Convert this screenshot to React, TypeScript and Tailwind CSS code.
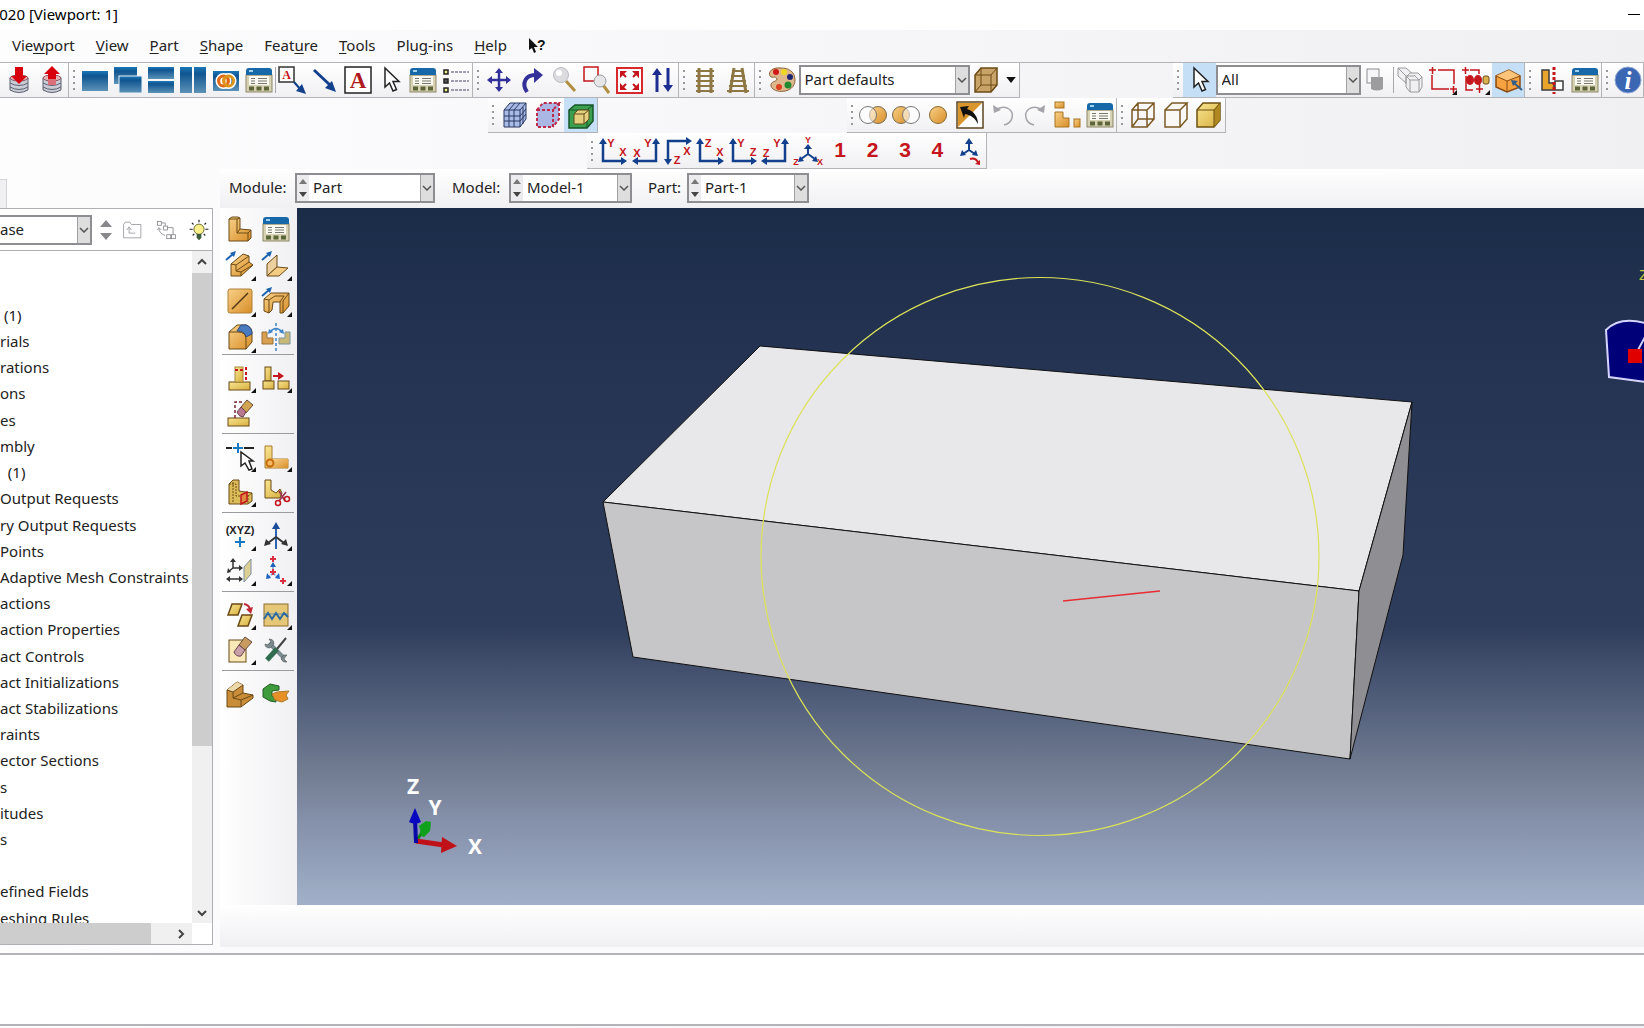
import React from 'react';
import clsx from 'clsx';

const gold = 'url(#gold)';
const yellow = 'url(#yellow)';
const blue = 'url(#blue)';
const RED = '#c4161c';
const NAVY = '#12408c';
const BROWN = '#6b4a16';

const tableIcon = (
  <>
    <rect x="1" y="9" width="26" height="17" fill="#d8d2b4" stroke="#8b8768" />
    <path d="M1 9V5q0-3 3-3h20q3 0 3 3v4z" fill="#1668a8" />
    <path d="M4 5h4" stroke="#9fd0f0" strokeWidth="2" />
    <rect x="4" y="10" width="20" height="9" fill="#fbfaf2" />
    <path d="M6 12.500h4M13 12.500h9M6 15h4M13 15h9M6 17.500h4M13 17.500h9" stroke="#77776c" />
    <path d="M4 22.500h5M11.500 22.500h5M19 22.500h5" stroke="#5c6638" strokeWidth="4" />
  </>
);

const cursorPath = 'M9 2v19l4.500-4 3.500 8 3.500-1.500-3.500-8h6z';

const icons: Record<string, React.ReactNode> = {
  dbIn: (
    <>
      <path d="M5 12v12q9 5 18 0V12z" fill="#c9ccd4" stroke="#5c6070" />
      <path d="M5 17q9 5 18 0M5 21q9 5 18 0" stroke="#5c6070" fill="none" />
      <ellipse cx="14" cy="12" rx="9" ry="3" fill="#e8b4b8" stroke="#8a5560" />
      <path d="M10 1h8v9h4l-8 8-8-8h4z" fill="#d8000c" />
    </>
  ),
  dbOut: (
    <>
      <path d="M5 12v12q9 5 18 0V12z" fill="#c9ccd4" stroke="#5c6070" />
      <path d="M5 17q9 5 18 0M5 21q9 5 18 0" stroke="#5c6070" fill="none" />
      <ellipse cx="14" cy="12" rx="9" ry="3" fill="#e8b4b8" stroke="#8a5560" />
      <path d="M10 12h8v7h-8z" fill="#d9707a" />
      <path d="M10 13V8H6l8-8 8 8h-4v5z" fill="#d8000c" />
    </>
  ),
  window: <rect x="1" y="5" width="26" height="20" fill={blue} />,
  cascade: (
    <>
      <rect x="0" y="1" width="23" height="17" fill={blue} />
      <rect x="5" y="10" width="23" height="17" fill={blue} stroke="#e8f0f8" />
    </>
  ),
  tileRows: (
    <>
      <rect x="1" y="1" width="26" height="12" fill={blue} />
      <rect x="1" y="15" width="26" height="12" fill={blue} />
    </>
  ),
  tileCols: (
    <>
      <rect x="1" y="1" width="12" height="26" fill={blue} />
      <rect x="15" y="1" width="12" height="26" fill={blue} />
    </>
  ),
  overlay: (
    <>
      <rect x="1" y="5" width="26" height="20" fill={blue} />
      <circle cx="11.500" cy="15" r="6" fill="#f4c898" stroke="#fff" strokeWidth="4" />
      <circle cx="16.500" cy="15" r="6" fill="none" stroke="#fff" strokeWidth="4" />
      <circle cx="11.500" cy="15" r="5" fill="none" stroke="#e06818" strokeWidth="3" />
      <circle cx="16.500" cy="15" r="5" fill="none" stroke="#dc9418" strokeWidth="3" />
    </>
  ),
  table: tableIcon,
  noteArrow: (
    <>
      <rect x="1" y="1" width="15" height="15" fill="#fff" stroke="#333" strokeWidth="1.500" />
      <text x="8.500" y="13" textAnchor="middle" fontSize="12" fontWeight="bold" fontFamily="Liberation Serif" fill={RED}>A</text>
      <path d="M16 16l7 8" stroke={NAVY} strokeWidth="2" />
      <path d="M28 28l-10-3 6-7z" fill={NAVY} />
    </>
  ),
  arrow: (
    <>
      <path d="M3 4l17 16" stroke={NAVY} strokeWidth="3" />
      <path d="M25 26l-11-4 7-7z" fill={NAVY} />
    </>
  ),
  letterA: (
    <>
      <rect x="1" y="1" width="26" height="26" fill="#fff" stroke="#222" strokeWidth="1.500" />
      <text x="14" y="22" textAnchor="middle" fontSize="23" fontWeight="bold" fontFamily="Liberation Serif" fill="#b01820">A</text>
    </>
  ),
  cursor: <path d={cursorPath} fill="#fff" stroke="#222" strokeWidth="1.500" />,
  list: (
    <>
      <g fill="#eef08a" stroke="#222" strokeWidth="1.500">
        <rect x="2" y="4" width="4" height="4" />
        <rect x="2" y="13" width="4" height="4" fill="#555" />
        <rect x="2" y="22" width="4" height="4" />
      </g>
      <path d="M9 6h18M9 15h18M9 24h18" stroke="#446" strokeDasharray="3 1" />
    </>
  ),
  pan: (
    <g stroke="#33309a" fill="#33309a">
      <path d="M14 5v18M5 14h18" strokeWidth="2.500" />
      <path d="M14 2l4 5h-8zM14 26l4-5h-8zM2 14l5-4v8zM26 14l-5-4v8z" stroke="none" />
    </g>
  ),
  rotate: (
    <>
      <path d="M9 26C3 17 8 9 17 9" fill="none" stroke="#33309a" strokeWidth="4" />
      <path d="M16 2l9 7-9 8z" fill="#33309a" />
    </>
  ),
  magnify: (
    <>
      <path d="M16 15l9 10" stroke="#b09040" strokeWidth="3" />
      <circle cx="11" cy="9" r="7.500" fill="#dcdce0" stroke="#bcbcc4" />
      <circle cx="9" cy="7" r="3" fill="#fff" />
    </>
  ),
  boxZoom: (
    <>
      <rect x="1" y="1" width="14" height="14" fill="none" stroke={RED} strokeWidth="1.500" />
      <path d="M20 19l6 8" stroke="#b09040" strokeWidth="3" />
      <circle cx="17" cy="15" r="6" fill="#e6e6e8" stroke="#9c9ca4" />
    </>
  ),
  fit: (
    <>
      <rect x="2" y="2" width="25" height="25" fill="#fff" stroke="#d8282c" strokeWidth="2" />
      <path d="M11 11L6 6M18 11l5-5M11 18l-5 5M18 18l5 5" stroke={RED} strokeWidth="2" />
      <path d="M5 5h7l-7 7zM24 5h-7l7 7zM5 24h7l-7-7zM24 24h-7l7-7z" fill={RED} />
    </>
  ),
  cycle: (
    <g stroke="#1d2c90" fill="#1d2c90">
      <path d="M9 6v20M20 2v20" strokeWidth="3" />
      <path d="M9 2l5 7H4zM20 26l5-7H15z" stroke="none" />
    </g>
  ),
  parallel: (
    <g stroke="#8e7742" strokeWidth="2">
      <path d="M8 2v25M20 2v25" strokeWidth="3" />
      <path d="M5 5h18M5 10h18M5 15h18M5 20h18M5 25h18" />
    </g>
  ),
  perspective: (
    <g stroke="#8e7742" strokeWidth="2" fill="none">
      <path d="M10 2L6 27M18 2l4 25" strokeWidth="3" />
      <path d="M8 5h12M7 10h14M6 15h16M5 20h18M3 25h22" />
    </g>
  ),
  palette: (
    <>
      <path d="M13 2C4 1 0 6 2 10c2 3 6-1 7 3 0 3-7 2-6 7 2 8 24 8 24-6C27 5 20 2 13 2z" fill="#dfb78c" stroke="#8a6238" />
      <circle cx="8" cy="6" r="3" fill="#d01818" />
      <circle cx="16" cy="6" r="3" fill="#f0d820" />
      <circle cx="22" cy="11" r="3" fill="#1c2470" />
      <circle cx="20" cy="19" r="3.500" fill="#218a30" />
      <circle cx="11" cy="21" r="3" fill="#e04020" />
    </>
  ),
  cubeTan: (
    <>
      <path d="M3 9l6-7h16v17l-6 7H3z" fill="#c9a468" stroke={BROWN} strokeWidth="1.500" />
      <path d="M3 9h16v17M19 9l6-7M9 2v17h16M3 26l6-7" fill="none" stroke={BROWN} />
    </>
  ),
  copyGrey: (
    <>
      <rect x="4" y="3" width="12" height="14" fill="#f6f6f8" stroke="#8e8e92" />
      <path d="M8 11h12v12q-6 3-12 0z" fill="#9c9c9e" />
    </>
  ),
  cubesGrey: (
    <g fill="#f0f0f2" stroke="#9a9a9e">
      <path d="M2 8V2h8l8 7v8H10L2 10z" />
      <path d="M10 11l4-4h8l4 4v10l-3 5h-9l-4-5z" />
      <path d="M2 2l8 8h8M10 10v8M14 14h9l3-3M14 14v12M23 14v12M10 10l4 4M18 9l5 5" fill="none" />
    </g>
  ),
  dragBox: (
    <g stroke={RED} strokeWidth="1.500" fill="none">
      <path d="M9 4h16v14M3 9v14h17" />
      <path d="M0 4h7M3.500 1v7M21 23h7M24.500 20v7" />
    </g>
  ),
  dragPoints: (
    <>
      <path d="M1 4h7M4.500 1v7M9 4h9v4M5 10v14h7M15 23h7M18.500 18v9" stroke={RED} strokeWidth="1.500" fill="none" />
      <ellipse cx="9" cy="14" rx="4" ry="5" fill={RED} />
      <ellipse cx="17" cy="14" rx="4" ry="5" fill={RED} />
      <rect x="22" y="10" width="6" height="8" rx="2" fill="#d8b050" stroke={BROWN} />
    </>
  ),
  cubeOrange: (
    <>
      <path d="M2 10L15 4l11 6v11l-13 5L2 21z" fill="#f6a240" stroke="#8b4a10" strokeWidth="1.500" />
      <path d="M2 10L15 4l11 6-13 5z" fill="#fcc478" />
      <path d="M2 10l11 5 13-5M13 15v11" fill="none" stroke="#8b4a10" />
      <path d="M28 24l-8-7" stroke="#345c84" strokeWidth="2" />
      <path d="M17 14l7 1-5 5z" fill="#345c84" />
    </>
  ),
  lHalf: (
    <>
      <path d="M4 4h7v13h5v7H4z" fill="#e8a42c" stroke="#3c3c3c" strokeWidth="1.500" />
      <path d="M17 15h8v9h-8z" fill="#fff" stroke="#3c3c3c" strokeWidth="1.500" />
      <path d="M16 1v27" stroke={RED} strokeWidth="3" strokeDasharray="3 2" />
    </>
  ),
  info: (
    <>
      <circle cx="14" cy="14" r="13" fill="#3b66b4" stroke="#8fa8d4" />
      <text x="14" y="23" textAnchor="middle" fontSize="25" fontStyle="italic" fontWeight="bold" fontFamily="Liberation Serif" fill="#fff">i</text>
    </>
  ),
  meshCube: (
    <>
      <path d="M3 9l6-7h16v16l-6 8H3z" fill="#a9bce8" />
      <path d="M3 9h16v17H3zM3 9l6-7h16l-6 7M25 2v16l-6 8M8 9v17M13 9v17M3 15h16l6-7M3 20h16l6-7M8 9l6-7M13 9l6-7M22 6v17" fill="none" stroke="#283860" />
    </>
  ),
  redCube: (
    <>
      <path d="M3 9l6-7h16v16l-6 8H3z" fill="#aab6e4" />
      <path d="M3 9h16v17H3zM3 9l6-7h16l-6 7M25 2v16l-6 8" fill="none" stroke="#c02848" strokeWidth="2" strokeDasharray="3 2" />
    </>
  ),
  greenCube: (
    <>
      <path d="M2 9l6-5h18v16l-6 7H2z" fill="#3aa050" stroke="#165428" strokeWidth="1.500" />
      <path d="M2 9h18v18M20 9l6-5" fill="none" stroke="#165428" />
      <path d="M7 13l4-4h11v9l-5 5H7z" fill="#e6d080" stroke="#5c4c18" />
      <path d="M7 13h10v10M17 13l5-4" fill="none" stroke="#5c4c18" />
    </>
  ),
  vennRight: (
    <>
      <circle cx="19" cy="14" r="8.500" fill={gold} stroke="#7a6a50" />
      <circle cx="9" cy="14" r="8.500" fill="#fff" fillOpacity="0.500" stroke="#777" />
    </>
  ),
  vennLeft: (
    <>
      <circle cx="9" cy="14" r="8.500" fill={gold} stroke="#7a6a50" />
      <circle cx="19" cy="14" r="8.500" fill="#fff" fillOpacity="0.600" stroke="#777" />
    </>
  ),
  disc: <circle cx="14" cy="14" r="8.500" fill={gold} stroke="#8a6a30" />,
  replace: (
    <>
      <rect x="1" y="1" width="26" height="26" fill="#fff" stroke="#5c4420" strokeWidth="1.500" />
      <path d="M2 2h24L2 26z" fill="#d8962c" />
      <path d="M4 6l9-1-2 3c7 2 11 8 11 15-3-6-7-9-13-10l-1 4z" fill="#111" />
    </>
  ),
  undo: (
    <>
      <path d="M8 8c10-5 17 2 15 9-1 4-4 6-8 7" fill="none" stroke="#a4a4aa" strokeWidth="1.500" />
      <path d="M4 4l1 8 7-3z" fill="#a4a4aa" />
    </>
  ),
  redo: (
    <>
      <path d="M20 8C10 3 3 10 5 17c1 4 4 6 8 7" fill="none" stroke="#a4a4aa" strokeWidth="1.500" />
      <path d="M24 4l-1 8-7-3z" fill="#a4a4aa" />
    </>
  ),
  blocks: (
    <g fill={gold} stroke="#a87420">
      <rect x="2" y="1" width="9" height="6" />
      <path d="M2 11h8v6h6v9H2z" />
      <rect x="21" y="18" width="6" height="8" />
    </g>
  ),
  wireCube: <path d="M3 9h15v17H3zM9 2h16v16H9zM3 9l6-7M18 9l7-7M18 26l7-8M3 26l6-8" fill="none" stroke="#7c5a24" strokeWidth="1.500" />,
  hiddenCube: <path d="M3 9h15v17H3zM3 9l7-7h15l-7 7M25 2v16l-7 8" fill="#faf8f4" stroke="#7c5a24" strokeWidth="1.500" />,
  shadedCube: (
    <>
      <path d="M2 9l6-7h17v17l-6 7H2z" fill={yellow} stroke="#6c5010" strokeWidth="1.500" />
      <path d="M19 9l6-7v17l-6 7z" fill="#b08820" />
      <path d="M2 9h17v17M19 9l6-7" fill="none" stroke="#6c5010" />
    </>
  ),
  triad: (
    <>
      <path d="M14 10v7M14 17l-7 5M14 17l7 5" stroke={NAVY} strokeWidth="2" />
      <path d="M14 7l4 5h-8zM4 25l2-6 4 5zM24 25l-2-6-4 5z" fill={NAVY} />
      <g fontSize="9" fontWeight="bold" fontFamily="Liberation Sans" fill={RED} textAnchor="middle">
        <text x="14" y="6">Y</text>
        <text x="2" y="28">Z</text>
        <text x="26" y="28">X</text>
      </g>
    </>
  ),
  triadTurn: (
    <>
      <path d="M13 5v8M13 13l-6 4M13 13l6 4" stroke={NAVY} strokeWidth="2" />
      <path d="M13 1l4 6H9zM4 19l2-6 4 5zM22 19l-2-6-4 5z" fill={NAVY} />
      <path d="M14 22q5-2 8 3" fill="none" stroke={RED} strokeWidth="2" />
      <path d="M24 28l-5-1 5-4z" fill={RED} />
    </>
  ),
  lSolid: (
    <>
      <path d="M3 4l3-2h6l2 1v11l11 1v8l-3 3H3z" fill={gold} stroke={BROWN} />
      <path d="M3 4h8v14h11v8M11 4l3-1M11 18l3-4M22 18l3-3" fill="none" stroke={BROWN} />
    </>
  ),
  extrude: (
    <>
      <path d="M5 13L17 3l6 2v6l4 3-12 11H5z" fill={gold} stroke={BROWN} />
      <path d="M5 13l5 1v6l5 1v4M10 14L23 5M10 20l13-9M15 21l12-7" fill="none" stroke={BROWN} />
      <path d="M0 9l7-6" stroke="#1c64b0" strokeWidth="2" />
      <path d="M10 0L8 6 4 2z" fill="#1c64b0" />
    </>
  ),
  shellExtrude: (
    <>
      <path d="M5 13L15 4v12L5 25z" fill="#ecd0a0" stroke={BROWN} />
      <path d="M5 25l10-9 11 1-9 8z" fill="#f4cc84" stroke={BROWN} />
      <path d="M0 9l7-6" stroke="#1c64b0" strokeWidth="2" />
      <path d="M10 0L8 6 4 2z" fill="#1c64b0" />
    </>
  ),
  wire: (
    <>
      <rect x="2" y="2" width="24" height="24" rx="2" fill={gold} stroke="#b08038" />
      <path d="M6 22L22 6" stroke="#4c3410" strokeWidth="1.500" />
    </>
  ),
  sweep: (
    <>
      <path d="M2 12l7-6h18v13l-6 7h-3V15h-7l-1 8-3 3-5-2z" fill={gold} stroke={BROWN} />
      <path d="M2 12l5 1v13M7 13l6-4h9l-4 6M21 14l6-8M21 14v12" fill="none" stroke={BROWN} />
      <path d="M0 9l7-6" stroke="#1c64b0" strokeWidth="2" />
      <path d="M10 0L8 6 4 2z" fill="#1c64b0" />
    </>
  ),
  round: (
    <>
      <path d="M3 9l8-7h9q6 2 6 8v9l-6 7H3z" fill={gold} stroke={BROWN} />
      <path d="M11 8l4-6h5q6 2 6 9l-6 3q-1-6-9-6z" fill="#4a7ac0" stroke="#2c4c84" />
      <path d="M3 9h9q8 0 8 7v10" fill="none" stroke={BROWN} />
    </>
  ),
  mirror: (
    <>
      <path d="M0 9h5v6h6v6H0z" fill="#d8a050" stroke="#9a7038" />
      <path d="M28 9h-5v6h-6v6h11z" fill="#c8b878" stroke="#7c94a0" />
      <path d="M14 0v28" stroke="#3c84c8" strokeWidth="1.500" strokeDasharray="3 2" />
      <path d="M8 9q6-7 12 0" fill="none" stroke="#3c84c8" strokeWidth="1.500" />
      <path d="M6 11l1-5 4 3zM22 11l-1-5-4 3z" fill="#3c84c8" />
    </>
  ),
  tee: (
    <>
      <rect x="3" y="18" width="21" height="8" fill={yellow} stroke={BROWN} />
      <rect x="9" y="3" width="8" height="15" fill={yellow} stroke="#a88838" />
      <path d="M20 3v15M9 6h9" stroke={RED} strokeWidth="2" strokeDasharray="3 2" />
    </>
  ),
  move: (
    <>
      <rect x="3" y="3" width="6" height="14" fill={yellow} stroke={BROWN} />
      <rect x="1" y="17" width="11" height="8" fill={yellow} stroke={BROWN} />
      <rect x="16" y="17" width="11" height="8" fill={yellow} stroke={BROWN} />
      <path d="M11 12h6" stroke={RED} strokeWidth="2" />
      <path d="M22 12l-6-4v8z" fill={RED} />
    </>
  ),
  eraseFeature: (
    <>
      <rect x="2" y="19" width="21" height="8" fill={yellow} stroke={BROWN} />
      <path d="M9 19V3h8" fill="none" stroke="#7c2430" strokeWidth="1.500" strokeDasharray="3 2" />
      <path d="M15 8l6-7 6 5-7 8z" fill="#d0a450" stroke="#6c4c3c" />
      <path d="M11 13l4-5 5 5-3 5q-4 0-6-5z" fill="#b87890" stroke="#6c4050" />
    </>
  ),
  datumPick: (
    <>
      <path d="M0 5h6M18 5h10" stroke="#222" strokeWidth="2" />
      <path d="M12 0v10M7 5h10" stroke="#1c78c0" strokeWidth="2" />
      <path d="M15 9v14l4-3 4 7 3-1-3-8h4z" fill="#fff" stroke="#222" strokeWidth="1.500" />
    </>
  ),
  partitionL: (
    <>
      <path d="M3 3h7v13h16v9H3z" fill={yellow} stroke="#a87c30" />
      <path d="M10 16h16v9H10z" fill={gold} />
      <circle cx="8" cy="20" r="3.500" fill="#f4b860" stroke="#c86c10" strokeWidth="2" />
    </>
  ),
  partitionCell: (
    <>
      <path d="M3 6l4-4h6v11l13 2v8l-4 3H3z" fill="#dcbc58" stroke={BROWN} />
      <path d="M3 6h7v12h12v8M7 4v20M22 18l4-3" fill="none" stroke={BROWN} strokeDasharray="2 1" />
      <path d="M15 17l6-3v9l-6 3z" fill="#e08840" stroke={RED} strokeWidth="1.500" />
    </>
  ),
  cutL: (
    <>
      <path d="M3 2h6v10l5 3 4-4 2 4-2 5H3z" fill={yellow} stroke={BROWN} />
      <path d="M17 13l6 10M24 14l-7 9" stroke="#9c3050" strokeWidth="1.500" />
      <circle cx="16" cy="25" r="2.500" fill="none" stroke={RED} strokeWidth="1.500" />
      <circle cx="25" cy="21" r="2.500" fill="none" stroke={RED} strokeWidth="1.500" />
    </>
  ),
  xyz: (
    <>
      <text x="14" y="12" textAnchor="middle" fontSize="11" fontWeight="bold" fontFamily="Liberation Sans" fill="#222">(XYZ)</text>
      <path d="M14 15v10M9 20h10" stroke="#1c78c0" strokeWidth="2" />
    </>
  ),
  datumCsys: (
    <>
      <path d="M14 3v24" stroke="#2c64b0" strokeWidth="2" />
      <path d="M14 0l4 7h-8z" fill="#1c4c98" />
      <path d="M14 15l-8 6M14 15l8 6" stroke="#333" strokeWidth="2" />
      <path d="M2 24l2-7 5 5zM26 24l-2-7-5 5z" fill="#333" />
    </>
  ),
  datumPlane: (
    <>
      <path d="M7 11V3M7 11h8M7 11l-5 4M2 22h14" stroke="#333" strokeWidth="1.500" />
      <path d="M7 1l3 4H4zM17 11l-4-3v6zM0 22l4-3v6zM17 22l-4-3v6zM1 16l1-5 3 4z" fill="#333" />
      <path d="M18 10l7-8v15l-7 8z" fill="#dccf94" stroke="#7c90a0" />
    </>
  ),
  datumPoints: (
    <>
      <path d="M11 6v10M11 16l-5 5M11 16l5 5" stroke="#7ca0d0" strokeWidth="1.500" strokeDasharray="3 1" />
      <path d="M11 5l3 5H8zM4 22l1-6 4 5zM18 22l-1-6-4 5z" fill="#1c64c0" />
      <path d="M8 2h6M11-1v6M8 15h6M11 12v6M18 24h6M21 21v6" stroke="#d83040" strokeWidth="2" />
    </>
  ),
  copyShape: (
    <>
      <path d="M2 14L6 3h10l-4 11z" fill={yellow} stroke={BROWN} strokeWidth="1.500" />
      <path d="M12 25l4-11h10l-4 11z" fill={yellow} stroke={BROWN} strokeWidth="1.500" />
      <path d="M18 3q5 1 6 5" fill="none" stroke="#c02838" strokeWidth="2" />
      <path d="M25 13l-5-5 7-2z" fill="#c02838" />
    </>
  ),
  wave: (
    <>
      <rect x="2" y="3" width="24" height="22" fill="#e4c878" stroke="#8c6c2c" />
      <path d="M2 13h24" stroke="#6890b0" />
      <path d="M2 18l4-6 4 6 4-6 4 6 4-6 4 4" fill="none" stroke="#2c68a0" strokeWidth="2" />
    </>
  ),
  eraser: (
    <>
      <rect x="3" y="4" width="17" height="22" fill="#f8e8b8" stroke={BROWN} />
      <path d="M13 9l6-8 7 5-7 8z" fill="#c89c60" stroke="#6c4c3c" />
      <path d="M8 16l5-7 6 5-4 6q-5 1-7-4z" fill="#c8a0a8" stroke="#6c4050" />
    </>
  ),
  tools: (
    <>
      <path d="M7 7l15 15" stroke="#7c8c90" strokeWidth="4" />
      <path d="M3 8q0 4 5 4l4-4q0-5-5-5l2 3-3 3zM25 19q-4-1-5 2l-1 2q2 4 6 3l-3-3 2-3z" fill="#7c8c90" stroke="#444" strokeWidth="0.500" />
      <path d="M24 2l-9 11" stroke="#444" strokeWidth="2" />
      <path d="M15 13L5 24" stroke="#2f6c50" strokeWidth="5" />
    </>
  ),
  lBrown: (
    <>
      <path d="M1 10l10-8 6 3v8l10 2v3L15 27H1z" fill="#c98c38" stroke={BROWN} />
      <path d="M1 10l10-8 6 3-10 7z" fill="#ecd8a8" />
      <path d="M1 10l6 2v6l8 2v7M7 12l10-7M7 18l10-5M15 20l12-5" fill="none" stroke={BROWN} />
    </>
  ),
  greenSwap: (
    <>
      <path d="M1 9l7-5 9 2v4l-7 1v5l4 1v5l-6-1-7-4z" fill="#3f9c3c" stroke="#245c24" />
      <path d="M10 14l5-2 12-1-3 4 2 4-6 3-7-2z" fill="#e89028" stroke="#a87c28" />
    </>
  ),
  panelUp: <path d="M2 24V7l2-3h6l2 3h12v17zM17 18h-8v-7M6 14l3-4 3 4" fill="none" stroke="#909096" />,
  panelLink: (
    <g fill="none" stroke="#808086">
      <rect x="3" y="3" width="5" height="5" />
      <rect x="11" y="9" width="5" height="5" />
      <rect x="15" y="20" width="5" height="5" />
      <rect x="21" y="20" width="5" height="5" />
      <path d="M8 5h5v4M16 11h7v9M5 12q0 6 8 9M3 14l2-3 3 3" />
    </g>
  ),
  bulb: (
    <>
      <path d="M14 1v3M5 5l2 2M23 5l-2 2M2 13h4M26 13h-4M6 21l2-2M22 21l-2-2" stroke="#222" strokeWidth="1.500" />
      <circle cx="14" cy="13" r="6.500" fill="#fbf08c" stroke="#4c4c18" />
      <path d="M11 19h6v5l-3 3-3-3z" fill="#3c5c3c" />
    </>
  ),
};

// Two-arm axis glyphs: arms start at one corner, each end carries its letter.
const axisViews = [
  { name: 'Front view', d: 'M4 5v19h20', heads: 'M4 1l4 6H0zM28 24l-6-4v8z', a: ['Y', 12, 10], b: ['X', 24, 19] },
  { name: 'Back view', d: 'M24 5v19H5', heads: 'M24 1l4 6h-8zM0 24l6-4v8z', a: ['Y', 16, 10], b: ['X', 5, 20] },
  { name: 'Top view', d: 'M4 23V4h20', heads: 'M4 28l4-6H0zM28 4l-6-4v8z', a: ['Z', 13, 27], b: ['X', 23, 18] },
  { name: 'Bottom view', d: 'M4 5v19h20', heads: 'M4 1l4 6H0zM28 24l-6-4v8z', a: ['Z', 12, 10], b: ['X', 24, 19] },
  { name: 'Left view', d: 'M4 5v19h20', heads: 'M4 1l4 6H0zM28 24l-6-4v8z', a: ['Y', 12, 10], b: ['Z', 24, 19] },
  { name: 'Right view', d: 'M24 5v19H5', heads: 'M24 1l4 6h-8zM0 24l6-4v8z', a: ['Y', 16, 10], b: ['Z', 5, 20] },
];

const Icon = ({ name }: { name: string }) => (
  <svg viewBox="0 0 28 28" className="size-7 shrink-0 overflow-visible" aria-hidden="true">{icons[name]}</svg>
);

const CornerMark = () => (
  <svg viewBox="0 0 6 6" className="absolute right-[2px] bottom-[2px] size-[5px]" aria-hidden="true">
    <path d="M6 0v6H0z" fill="#111" />
  </svg>
);

interface ToolProps {
  name: string;
  active?: boolean;
  more?: boolean;
}

const Tool: React.FC<ToolProps> = ({ name, active, more }) => (
  <button
    type="button"
    aria-label={name}
    className={clsx('relative flex h-full flex-1 items-center justify-center', active && 'bg-[#c4dff6]')}
  >
    <Icon name={name} />
    {more && <CornerMark />}
  </button>
);

const Grip = () => (
  <div className="flex w-[10px] shrink-0 flex-col items-center justify-center gap-1">
    <i className="size-[2px] bg-[#98989c]" />
    <i className="size-[2px] bg-[#98989c]" />
    <i className="size-[2px] bg-[#98989c]" />
    <i className="size-[2px] bg-[#98989c]" />
  </div>
);

const Divider = () => <div className="my-1 w-px shrink-0 bg-[#a8a8ac]" />;

const Group: React.FC<{ className?: string; children: React.ReactNode }> = ({ className, children }) => (
  <div
    className={clsx(
      'flex shrink-0 items-stretch border-r border-b border-[#b4b4b8] bg-linear-to-b from-white to-[#f0eff2]',
      className,
    )}
  >
    {children}
  </div>
);

interface ComboProps {
  id: string;
  label?: string;
  value: string;
  spinner?: boolean;
  className?: string;
}

const Combo: React.FC<ComboProps> = ({ id, label, value, spinner, className }) => (
  <div className={clsx('flex h-[30px] items-stretch border-2 border-[#8e8e92] bg-white', className)}>
    {spinner && (
      <div className="flex w-3 shrink-0 flex-col items-center justify-around bg-[#ececee]">
        <svg viewBox="0 0 8 5" className="h-[5px] w-2"><path d="M4 0l4 5H0z" fill="#777" /></svg>
        <svg viewBox="0 0 8 5" className="h-[5px] w-2"><path d="M4 5l4-5H0z" fill="#444" /></svg>
      </div>
    )}
    <select id={id} aria-label={label} className="min-w-0 flex-1 appearance-none bg-transparent pb-px pl-1 text-[15px] outline-none">
      <option>{value}</option>
    </select>
    <div className="pointer-events-none flex w-[13px] shrink-0 items-center justify-center border-l border-[#a0a0a4] bg-[#dededf]">
      <svg viewBox="0 0 10 6" className="h-[6px] w-[10px]"><path d="M1 1l4 4 4-4" fill="none" stroke="#555" strokeWidth="1.500" /></svg>
    </div>
  </div>
);

const menus = [
  ['Vie', 'w', 'port'],
  ['', 'V', 'iew'],
  ['', 'P', 'art'],
  ['', 'S', 'hape'],
  ['Feat', 'u', 're'],
  ['', 'T', 'ools'],
  ['Plu', 'g', '-ins'],
  ['', 'H', 'elp'],
];

const MenuBar = () => (
  <nav className="flex h-8 shrink-0 items-center gap-[21px] pb-px pl-3">
    {menus.map(([before, key, after]) => (
      <button key={before + key} type="button" className="text-[15px]">
        {before}
        <span className="underline underline-offset-2">{key}</span>
        {after}
      </button>
    ))}
    <button type="button" aria-label="Context help" className="flex items-center">
      <svg viewBox="0 0 18 18" className="size-[18px]">
        <path d="M1 1v12l3-2 2 5 2-1-2-5h4z" fill="#111" />
        <text x="9" y="13" fontSize="14" fontWeight="bold" fontFamily="Liberation Sans" fill="#111">?</text>
      </svg>
    </button>
  </nav>
);

const MainToolbar = () => (
  <div className="flex h-9 shrink-0 items-stretch border-t border-[#b4b4b8]">
    <Group className="w-[69px] pl-[3px]">
      <Tool name="dbIn" />
      <Tool name="dbOut" />
    </Group>
    <Group className="w-[404px]">
      <Grip />
      {['window', 'cascade', 'tileRows', 'tileCols', 'overlay', 'table'].map((n) => <Tool key={n} name={n} />)}
      <Divider />
      {['noteArrow', 'arrow', 'letterA', 'cursor', 'table', 'list'].map((n) => <Tool key={n} name={n} />)}
    </Group>
    <Group className="w-[206px]">
      <Grip />
      {['pan', 'rotate', 'magnify', 'boxZoom', 'fit', 'cycle'].map((n) => <Tool key={n} name={n} />)}
    </Group>
    <Group className="w-[76px]">
      <Grip />
      <Tool name="parallel" />
      <Tool name="perspective" />
    </Group>
    <Group className="w-[265px]">
      <Grip />
      <Tool name="palette" />
      <Combo id="color-code" label="Color coding" value="Part defaults" className="my-[2px] w-[171px]" />
      <Tool name="cubeTan" />
      <button type="button" aria-label="More" className="flex w-4 items-center justify-center">
        <svg viewBox="0 0 8 5" className="h-[6px] w-[10px]"><path d="M0 0h8L4 5z" fill="#111" /></svg>
      </button>
    </Group>
    <Group className="ml-auto w-[352px]">
      <Grip />
      <Tool name="cursor" active />
      <Combo id="selection-filter" label="Selection filter" value="All" className="my-[2px] w-[145px]" />
      <Tool name="copyGrey" />
      <Divider />
      <Tool name="cubesGrey" />
      <Tool name="dragBox" more />
      <Tool name="dragPoints" more />
      <Tool name="cubeOrange" active />
    </Group>
    <Group className="w-[77px]">
      <Grip />
      <Tool name="lHalf" />
      <Tool name="table" />
    </Group>
    <Group className="w-[42px]">
      <Grip />
      <Tool name="info" />
    </Group>
  </div>
);

const ViewToolbars = () => (
  <>
    <div className="flex h-[35px] shrink-0 items-stretch pl-[488px]">
      <Group className="w-[110px]">
        <Grip />
        <Tool name="meshCube" />
        <Tool name="redCube" />
        <Tool name="greenCube" active />
      </Group>
      <Group className="ml-[249px] w-[270px]">
        <Grip />
        {['vennRight', 'vennLeft', 'disc', 'replace', 'undo', 'redo', 'blocks', 'table'].map((n) => <Tool key={n} name={n} />)}
      </Group>
      <Group className="w-[109px]">
        <Grip />
        <Tool name="wireCube" />
        <Tool name="hiddenCube" />
        <Tool name="shadedCube" />
      </Group>
    </div>
    <div className="flex h-9 shrink-0 items-stretch pl-[587px]">
      <Group className="w-[400px]">
        <Grip />
        {axisViews.map((v) => (
          <button key={v.name} type="button" aria-label={v.name} className="flex flex-1 items-center justify-center">
            <svg viewBox="0 0 28 28" className="size-7 shrink-0">
              <path d={v.d} fill="none" stroke={NAVY} strokeWidth="2.500" />
              <path d={v.heads} fill={NAVY} />
              <g fontSize="11" fontWeight="bold" fontFamily="Liberation Sans" fill={RED} textAnchor="middle">
                <text x={v.a[1]} y={v.a[2]}>{v.a[0]}</text>
                <text x={v.b[1]} y={v.b[2]}>{v.b[0]}</text>
              </g>
            </svg>
          </button>
        ))}
        <Tool name="triad" />
        {[1, 2, 3, 4].map((n) => (
          <button key={n} type="button" className="flex-1 pb-px font-['Liberation_Sans',sans-serif] text-[21px] font-bold text-[#c4161c]">
            {n}
          </button>
        ))}
        <Tool name="triadTurn" />
      </Group>
    </div>
  </>
);

const treeItems = [
  '\u00a0(1)', 'rials', 'rations', 'ons', 'es', 'mbly', '\u00a0\u00a0(1)', 'Output Requests', 'ry Output Requests', 'Points',
  'Adaptive Mesh Constraints', 'actions', 'action Properties', 'act Controls', 'act Initializations',
  'act Stabilizations', 'raints', 'ector Sections', 's', 'itudes', 's', '', 'efined Fields', 'eshing Rules',
];

const Chevron = ({ d }: { d: string }) => (
  <svg viewBox="0 0 10 10" className="size-[10px]"><path d={d} fill="none" stroke="#444" strokeWidth="2" /></svg>
);

const ModelTree = () => (
  <aside className="flex w-[220px] shrink-0 flex-col pb-2">
    <div className="flex h-[39px] shrink-0 items-end">
      <div className="h-[29px] w-[7px] border-t border-r border-[#d4d4d8] bg-[#f0eff2]" />
    </div>
    <div className="flex min-h-0 w-[213px] flex-1 flex-col border-t border-r border-b border-[#b0b0b4] bg-white">
      <div className="flex h-[41px] shrink-0 items-center">
        <Combo id="database" label="Database" value="ase" className="h-7 w-[92px] border-l-0 [&>select]:pl-0" />
        <svg viewBox="0 0 12 20" className="ml-2 h-5 w-3"><path d="M6 0l6 7H0zM6 20l6-7H0z" fill="#88888c" /></svg>
        <div className="flex flex-1 items-center justify-between pr-[2px] pl-[10px]">
          {['panelUp', 'panelLink', 'bulb'].map((n) => (
            <button key={n} type="button" aria-label={n} className="flex">
              <svg viewBox="0 0 28 28" className="size-[22px]">{icons[n]}</svg>
            </button>
          ))}
        </div>
      </div>
      <div className="flex min-h-0 flex-1 border-t border-[#b0b0b4]">
        <div className="min-w-0 flex-1 overflow-hidden pt-[51px]">
          <ul className="grid h-[629px] auto-rows-fr">
            {treeItems.map((item, i) => (
              <li key={i} className="flex items-center text-[15px] whitespace-nowrap text-[#222]">{item}</li>
            ))}
          </ul>
        </div>
        <div className="flex w-5 shrink-0 flex-col bg-[#f0f0f1]">
          <div className="flex h-[22px] items-center justify-center"><Chevron d="M1 7l4-4 4 4" /></div>
          <div className="flex-3 bg-[#cdcdce]" />
          <div className="flex-1" />
          <div className="flex h-5 items-center justify-center"><Chevron d="M1 3l4 4 4-4" /></div>
        </div>
      </div>
      <div className="flex h-[21px] shrink-0 items-stretch bg-[#f0f0f1]">
        <div className="w-[151px] bg-[#cdcdce]" />
        <div className="flex flex-1 items-center justify-end pr-[6px]"><Chevron d="M3 1l4 4-4 4" /></div>
        <div className="w-5 bg-white" />
      </div>
    </div>
  </aside>
);

const ContextBar = () => (
  <div className="flex h-[39px] shrink-0 items-center bg-linear-to-b from-white to-[#f0eff2] pb-[2px] pl-[9px] text-[15px]">
    <label htmlFor="module" className="w-[66px]">Module:</label>
    <Combo id="module" value="Part" spinner className="w-[140px]" />
    <label htmlFor="model" className="ml-[17px] w-[57px]">Model:</label>
    <Combo id="model" value="Model-1" spinner className="w-[123px]" />
    <label htmlFor="part" className="ml-4 w-[39px]">Part:</label>
    <Combo id="part" value="Part-1" spinner className="w-[122px]" />
  </div>
);

const firstTools = ['lSolid', 'table', 'extrude', 'shellExtrude', 'wire', 'sweep', 'round', 'mirror'];
const otherTools = [
  ['tee', 'move', 'eraseFeature'],
  ['datumPick', 'partitionL', 'partitionCell', 'cutL'],
  ['xyz', 'datumCsys', 'datumPlane', 'datumPoints'],
  ['copyShape', 'wave', 'eraser', 'tools'],
  ['lBrown', 'greenSwap'],
];
const noFlyout = ['lSolid', 'table', 'mirror', 'eraseFeature', 'cutL', 'tools', 'lBrown', 'greenSwap'];

const ToolboxButton = ({ name }: { name: string }) => (
  <button type="button" aria-label={name} className="relative flex items-center justify-center">
    <Icon name={name} />
    {!noFlyout.includes(name) && <CornerMark />}
  </button>
);

const Toolbox = () => (
  <div className="flex w-[77px] shrink-0 flex-col bg-linear-to-r from-white to-[#f0eff2] pr-[3px] pl-[2px]">
    <div className="mt-[3px] mb-[-1px] grid auto-rows-[36px] grid-cols-2">
      {firstTools.map((n) => <ToolboxButton key={n} name={n} />)}
    </div>
    {otherTools.map((group) => (
      <div key={group[0]} className="grid auto-rows-[35px] grid-cols-2 border-t border-[#9c9ca0] pt-[5px] pb-[3px]">
        {group.map((n) => <ToolboxButton key={n} name={n} />)}
      </div>
    ))}
  </div>
);

const Viewport = () => (
  <div className="min-w-0 flex-1 overflow-hidden bg-[linear-gradient(to_bottom,#1b2c49_0%,#253452_24%,#2f3d5c_60%,#525f7b_71%,#727d92_81%,#8590aa_88%,#a1b0c8_100%)]">
    <svg viewBox="297 207 1347 699" preserveAspectRatio="xMidYMid slice" className="size-full" role="img" aria-label="Part-1 model">
      <g stroke="#111" strokeLinejoin="round">
        <path d="M760 346L1412 402 1359 591 603 502z" fill="#e8e8ea" />
        <path d="M603 502L1359 591 1350 759 633 657z" fill="#c6c6c8" />
        <path d="M1412 402L1403 555 1350 759 1359 591z" fill="#8f8e92" />
      </g>
      <circle cx="1040" cy="556.500" r="279" fill="none" stroke="#dbe25a" strokeWidth="1.200" />
      <path d="M1063 601L1160 591" stroke="#e82c34" strokeWidth="1.500" />

      {/* Axis triad */}
      <path d="M417 840l6-9" stroke="#0a8a14" strokeWidth="3" />
      <path d="M420 829l-1-3 7-5 5 1-1 9-6 6-3-1z" fill="#0fa01c" />
      <path d="M416 841l28 4" stroke="#c01018" strokeWidth="5" />
      <path d="M442 837l15 9-16 7z" fill="#c01018" />
      <path d="M416 843l-1-24" stroke="#0808a8" strokeWidth="4" />
      <path d="M415 808l6 14q-6 3-12 0z" fill="#0808c0" />
      <g fontSize="21" fontWeight="bold" fontFamily="Noto Sans" fill="#fff" textAnchor="middle">
        <text x="413" y="794">Z</text>
        <text x="435" y="815">Y</text>
        <text x="475" y="854">X</text>
      </g>

      {/* View compass */}
      <path d="M1606 330q16-16 48-4v57l-45-6z" fill="#000078" stroke="#d4d4ff" strokeWidth="2" />
      <path d="M1638 350l8-15" stroke="#d4d4ff" strokeWidth="2" />
      <rect x="1628" y="349" width="14" height="14" fill="#e00000" />
      <text x="1639" y="280" fontSize="15" fontFamily="Liberation Sans" fill="#c8c83c">Z</text>
    </svg>
  </div>
);

export default function App() {
  return (
    <div className="flex h-screen flex-col overflow-hidden bg-linear-to-r from-[#fdfdfe] to-[#f0eff2] font-['Noto_Sans',sans-serif] text-[#222]">
      <svg className="absolute size-0" aria-hidden="true">
        <defs>
          <linearGradient id="gold" x1="0" y1="0" x2="1" y2="1">
            <stop offset="0" stopColor="#f8d088" />
            <stop offset="1" stopColor="#d88e28" />
          </linearGradient>
          <linearGradient id="yellow" x1="0" y1="0" x2="1" y2="1">
            <stop offset="0" stopColor="#f8e490" />
            <stop offset="1" stopColor="#d8b040" />
          </linearGradient>
          <linearGradient id="blue" x1="0" y1="0" x2="0" y2="1">
            <stop offset="0" stopColor="#1c78b8" />
            <stop offset="0.250" stopColor="#0f5590" />
            <stop offset="1" stopColor="#5c92b8" />
          </linearGradient>
        </defs>
      </svg>

      <header className="flex h-[30px] shrink-0 items-center justify-between bg-white pb-[2px]">
        <h1 className="flex w-[118px] justify-end overflow-hidden text-[15px] whitespace-nowrap text-black">020 [Viewport: 1]</h1>
        <button type="button" aria-label="Minimize" className="flex h-full w-7 items-center pl-3">
          <span className="h-px w-3 bg-black" />
        </button>
      </header>
      <MenuBar />
      <MainToolbar />
      <ViewToolbars />

      <main className="flex min-h-0 flex-1">
        <ModelTree />
        <div className="flex min-w-0 flex-1 flex-col">
          <ContextBar />
          <div className="flex min-h-0 flex-1">
            <Toolbox />
            <Viewport />
          </div>
          <div className="h-[42px] shrink-0 bg-linear-to-b from-white to-[#f0eff2]" />
          <div className="h-[6px] shrink-0 bg-[#fbfafc]" />
        </div>
      </main>

      <footer className="mb-[2px] h-[73px] shrink-0 border-y-2 border-[#b4b4b8] bg-white" />
    </div>
  );
}
